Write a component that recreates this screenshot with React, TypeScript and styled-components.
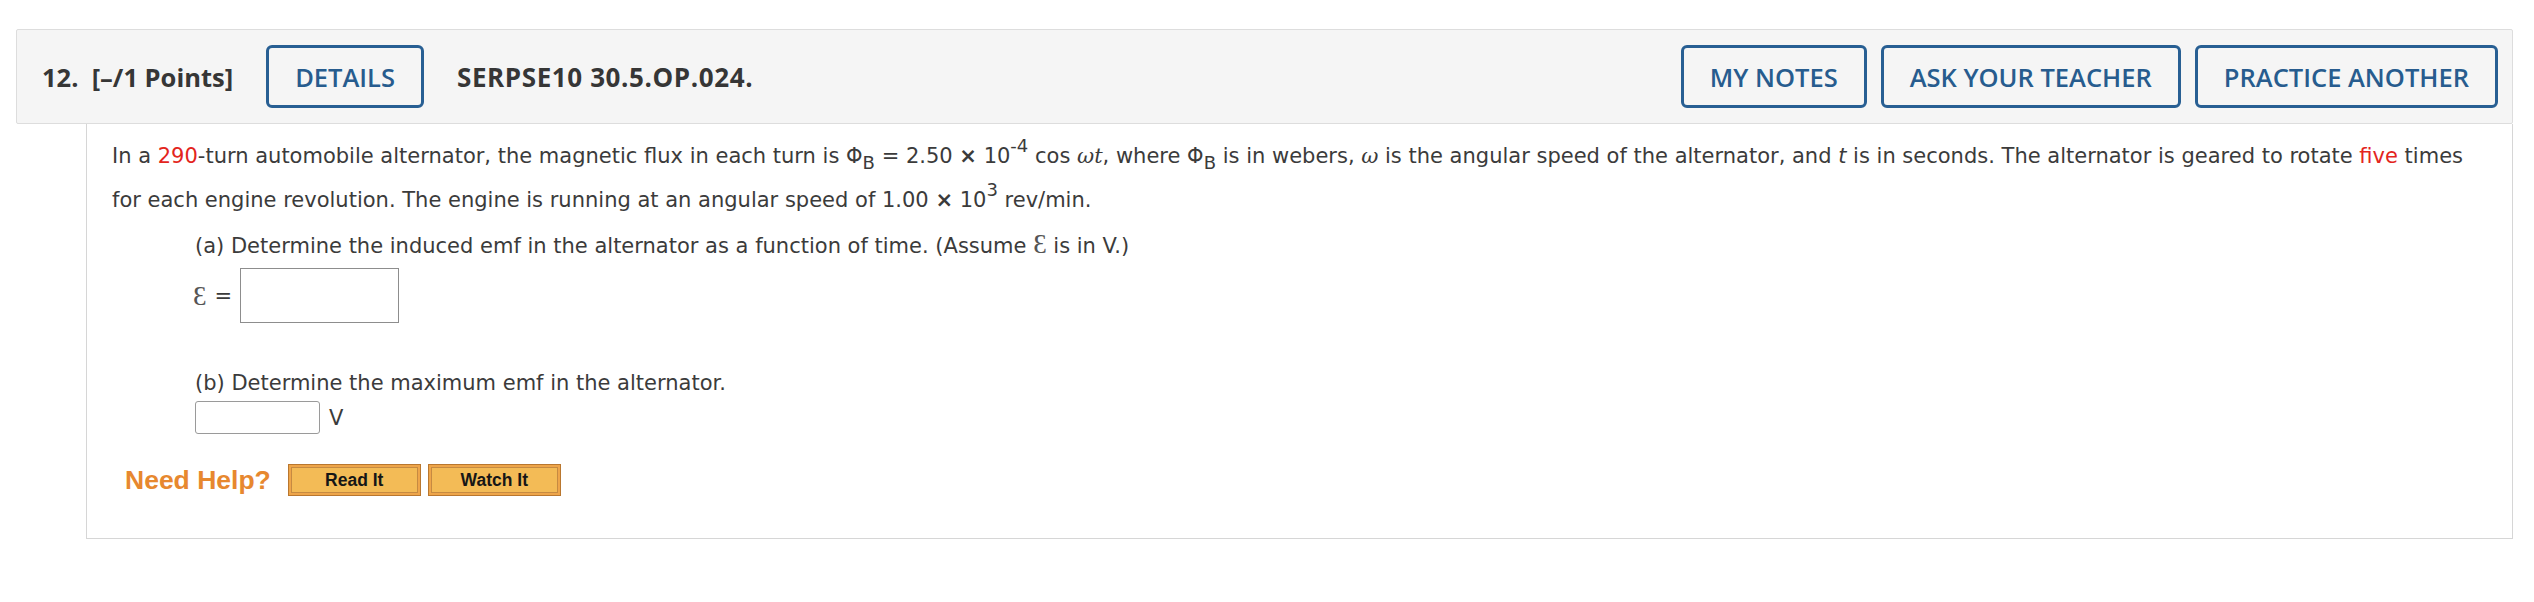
import React from "react";
import styled, { createGlobalStyle } from "styled-components";

const GlobalStyle = createGlobalStyle`
  body {
    margin: 0;
    background: #ffffff;
  }
`;

const Page = styled.div`
  padding: 29px 21px 0 16px;
`;

const Header = styled.div`
  display: flex;
  align-items: center;
  background-color: #f5f5f5;
  border: 1px solid #dddddd;
  border-radius: 2px;
  padding: 15px 14px 15px 25px;
  font-family: "Open Sans", "Liberation Sans", sans-serif;
  color: #363636;
`;

const Title = styled.span`
  font-size: 25.5px;
  font-weight: 700;
  white-space: pre;
`;

const Code = styled(Title)`
  margin-left: 33px;
  font-size: 26px;
  letter-spacing: 0.6px;
`;

const Spacer = styled.div`
  flex: 1;
`;

const OutlineButton = styled.button<{ $first?: boolean }>`
  height: 63px;
  padding: 0 26px;
  margin-left: ${(props) => (props.$first ? "33px" : "14px")};
  background: transparent;
  border: 3px solid #285f93;
  border-radius: 6px;
  color: #275c8e;
  font-family: "Open Sans", "Liberation Sans", sans-serif;
  font-size: 25.5px;
  font-weight: 600;
  text-transform: uppercase;
  cursor: pointer;
`;

const Body = styled.div`
  margin-left: 70px;
  border: 1px solid #d6d6d6;
  border-top: none;
  padding: 10px 26px 42px 25px;
  font-family: "DejaVu Sans", Verdana, sans-serif;
  font-size: 21px;
  line-height: 44px;
  color: #3b3b3b;
`;

const Red = styled.span`
  color: #e3251d;
`;

const Sub = styled.sub`
  font-size: 18px;
  line-height: 0;
  vertical-align: -6px;
`;

const Sup = styled.sup`
  font-size: 18px;
  line-height: 0;
  vertical-align: 11px;
`;

const Times = styled.b`
  font-weight: 700;
`;

const Greek = styled.i`
  font-family: "DejaVu Serif", "Liberation Serif", serif;
  font-style: italic;
`;

const Part = styled.div`
  margin-left: 83px;
`;

const Script = styled.span`
  font-family: "Liberation Serif", "DejaVu Serif", serif;
  font-size: 27px;
  color: #555555;
`;

const EmfRow = styled.div`
  display: flex;
  align-items: center;
  margin-left: -2px;
  gap: 8px;
`;

const BigInput = styled.div`
  width: 157px;
  height: 53px;
  border: 1px solid #8d8d8d;
  background: #ffffff;
`;

const PartB = styled(Part)`
  margin-top: 45px;
  line-height: 30px;
`;

const UnitRow = styled.div`
  display: flex;
  align-items: center;
  gap: 9px;
  margin-top: 3px;
`;

const SmallInput = styled.div`
  width: 123px;
  height: 31px;
  border: 1px solid #9a9a9a;
  border-radius: 3px;
  background: #ffffff;
`;

const HelpRow = styled.div`
  display: flex;
  align-items: center;
  margin: 30px 0 0 13px;
`;

const HelpLabel = styled.span`
  font-family: "Liberation Sans", Arial, sans-serif;
  font-weight: 700;
  font-size: 26.5px;
  line-height: 32px;
  color: #e7882f;
  margin-right: 17px;
`;

const HelpButton = styled.button`
  width: 133px;
  height: 32px;
  margin-right: 7px;
  padding: 0;
  background: #f3bb56;
  border: 1px solid #b9772f;
  box-shadow: inset 0 0 0 2px #eea54a, inset 0 0 0 3px #c68a42;
  font-family: "Liberation Sans", Arial, sans-serif;
  font-weight: 700;
  font-size: 17.5px;
  color: #161616;
  cursor: pointer;
`;

export default function App() {
  return (
    <Page>
      <GlobalStyle />
      <Header>
        <Title>12.  [–/1 Points]</Title>
        <OutlineButton $first>Details</OutlineButton>
        <Code>SERPSE10 30.5.OP.024.</Code>
        <Spacer />
        <OutlineButton>My Notes</OutlineButton>
        <OutlineButton>Ask Your Teacher</OutlineButton>
        <OutlineButton>Practice Another</OutlineButton>
      </Header>
      <Body>
        <div>
          In a <Red>290</Red>-turn automobile alternator, the magnetic flux in
          each turn is Φ<Sub>B</Sub> = 2.50 <Times>×</Times> 10<Sup>-4</Sup> cos{" "}
          <Greek>ωt</Greek>, where Φ<Sub>B</Sub> is in webers, <Greek>ω</Greek> is
          the angular speed of the alternator, and <i>t</i> is in seconds. The
          alternator is geared to rotate <Red>five</Red> times
          <br />
          for each engine revolution. The engine is running at an angular speed
          of 1.00 <Times>×</Times> 10<Sup>3</Sup> rev/min.
        </div>
        <Part>
          <div>
            (a) Determine the induced emf in the alternator as a function of
            time. (Assume <Script>Ɛ</Script> is in V.)
          </div>
          <EmfRow>
            <Script>Ɛ</Script>
            <span>=</span>
            <BigInput />
          </EmfRow>
        </Part>
        <PartB>
          <div>(b) Determine the maximum emf in the alternator.</div>
          <UnitRow>
            <SmallInput />
            <span>V</span>
          </UnitRow>
        </PartB>
        <HelpRow>
          <HelpLabel>Need Help?</HelpLabel>
          <HelpButton>Read It</HelpButton>
          <HelpButton>Watch It</HelpButton>
        </HelpRow>
      </Body>
    </Page>
  );
}
